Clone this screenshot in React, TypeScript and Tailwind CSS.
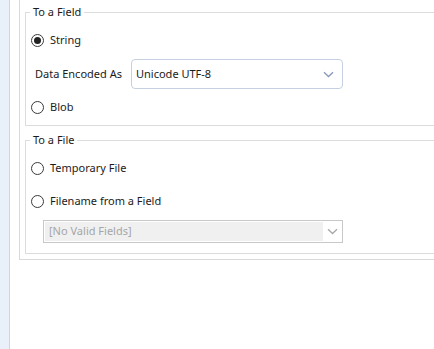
import React from "react";

function Radio({ checked, label }: { checked?: boolean; label: string }) {
  return (
    <div className="flex h-[20px] items-center pl-[5px]">
      <span className="flex h-[13px] w-[13px] items-center justify-center rounded-full border border-[#3a3a3a] bg-white">
        {checked && <span className="h-[7px] w-[7px] rounded-full bg-[#222222]" />}
      </span>
      <span className="ml-[6px] text-[11px] text-[#1b1b1b]">{label}</span>
    </div>
  );
}

function Chevron({ color }: { color: string }) {
  return (
    <svg width="11" height="7" viewBox="0 0 11 7" fill="none">
      <path d="M1 1.2 L5.5 5.5 L10 1.2" stroke={color} strokeWidth="1.3" />
    </svg>
  );
}

export default function App() {
  return (
    <div
      className="flex h-[349px] w-[434px] overflow-hidden bg-white"
      style={{ fontFamily: '"Noto Sans", "Open Sans", sans-serif' }}
    >
      <div className="h-full w-[10px] shrink-0 border-r border-[#d4d4d4] bg-[#eaf0fa]" />
      <div className="ml-[9px] w-[440px] shrink-0">
        <div className="border-b border-l border-[#d9d9d9] pb-[5px] pl-[5px] pt-[4px]">
          <fieldset className="border border-[#dcdcdc] pb-[8px]">
            <legend className="ml-[4px] px-[3px] text-[11px] leading-[16px] text-[#1b1b1b]">To a Field</legend>
            <div className="mt-[10px]">
              <Radio checked label="String" />
            </div>
            <div className="mt-[9px] flex items-center pl-[9px]">
              <span className="w-[96px] text-[11px] text-[#1b1b1b]">Data Encoded As</span>
              <div className="flex h-[30px] w-[212px] items-center justify-between rounded-[4px] border border-[#c6d0e2] bg-white pl-[4px] pr-[8px]">
                <span className="text-[11px] text-[#1b1b1b]">Unicode UTF-8</span>
                <Chevron color="#8a98b8" />
              </div>
            </div>
            <div className="mt-[8px]">
              <Radio label="Blob" />
            </div>
          </fieldset>
          <fieldset className="mt-[6px] border border-[#dcdcdc] pb-[10px]">
            <legend className="ml-[4px] px-[3px] text-[11px] leading-[16px] text-[#1b1b1b]">To a File</legend>
            <div className="mt-[10px]">
              <Radio label="Temporary File" />
            </div>
            <div className="mt-[13px]">
              <Radio label="Filename from a Field" />
            </div>
            <div className="mt-[9px] pl-[17px]">
              <div className="flex h-[23px] w-[300px] border border-[#c8c8c8] bg-white p-[1px]">
                <div className="flex flex-1 items-center bg-[#f0f0f0] pl-[4px]">
                  <span className="text-[11px] text-[#a6a6a6]">[No Valid Fields]</span>
                </div>
                <div className="flex w-[18px] items-center justify-center">
                  <Chevron color="#a8a8a8" />
                </div>
              </div>
            </div>
          </fieldset>
        </div>
      </div>
    </div>
  );
}
